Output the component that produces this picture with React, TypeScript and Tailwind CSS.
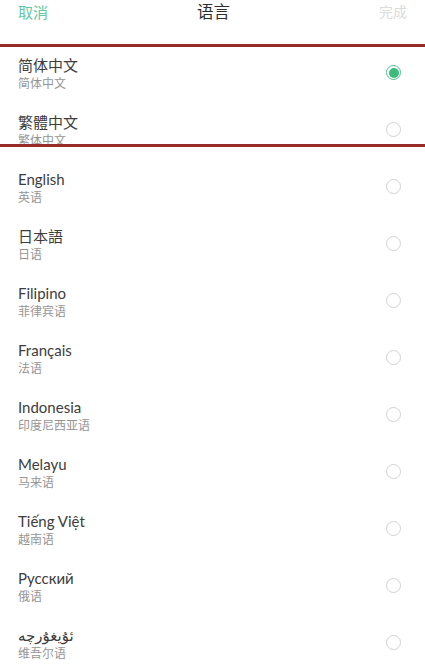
import React, { useState } from "react";

const languages = [
  { name: "简体中文", sub: "简体中文" },
  { name: "繁體中文", sub: "繁体中文" },
  { name: "English", sub: "英语" },
  { name: "日本語", sub: "日语" },
  { name: "Filipino", sub: "菲律宾语" },
  { name: "Français", sub: "法语" },
  { name: "Indonesia", sub: "印度尼西亚语" },
  { name: "Melayu", sub: "马来语" },
  { name: "Tiếng Việt", sub: "越南语" },
  { name: "Русский", sub: "俄语" },
  { name: "ئۇيغۇرچە", sub: "维吾尔语" },
];

const font = {
  fontFamily:
    'Lato, "Noto Sans", "DejaVu Sans", "Noto Sans CJK SC", sans-serif',
};

const Radio: React.FC<{ checked: boolean }> = ({ checked }) =>
  checked ? (
    <span className="flex h-[15px] w-[15px] items-center justify-center rounded-full border-[1.5px] border-[#52c08f] bg-white">
      <span className="h-[10px] w-[10px] rounded-full bg-[#3dbb7f]" />
    </span>
  ) : (
    <span className="h-[15px] w-[15px] rounded-full border-[1.5px] border-[#d2d2d2] bg-white" />
  );

const App: React.FC = () => {
  const [selected, setSelected] = useState(0);

  return (
    <div className="relative min-h-screen bg-white" style={font}>
      {/* Header */}
      <div className="flex h-[44px] items-start justify-between px-[18px] pt-[1px]">
        <span className="text-[15px] leading-[22px] text-[#62c8a0]">取消</span>
        <span className="text-[16.5px] leading-[22px] text-[#2e2e2e]">语言</span>
        <span className="text-[14px] leading-[22px] text-[#dcdcdc]">完成</span>
      </div>

      {/* List */}
      <div>
        {languages.map((lang, i) => (
          <div
            key={lang.name}
            onClick={() => setSelected(i)}
            className="flex h-[57px] items-center justify-between pl-[18px] pr-[24px]"
          >
            <div className="flex flex-col pt-[1px]">
              <span className="text-[15px] leading-[20px] text-[#3d3d3d]">
                {lang.name}
              </span>
              <span className="text-[12px] leading-[17px] text-[#959595]">
                {lang.sub}
              </span>
            </div>
            <Radio checked={selected === i} />
          </div>
        ))}
      </div>

      {/* Annotation box */}
      <div className="pointer-events-none absolute left-0 right-0 top-[44px] h-[103px] border-y-[3px] border-[#962b27]" />
    </div>
  );
};

export default App;
